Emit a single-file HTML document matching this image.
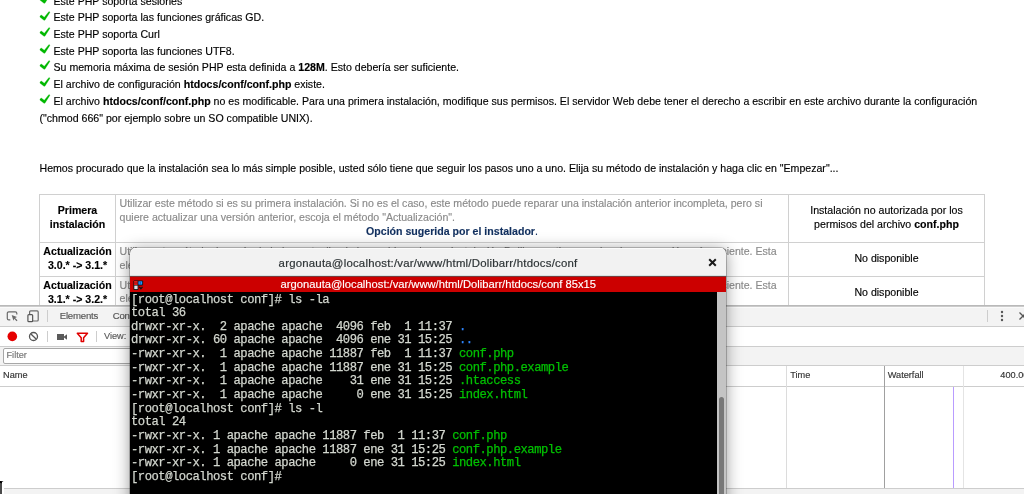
<!DOCTYPE html>
<html><head><meta charset="utf-8">
<style>
html,body{margin:0;padding:0}
body{-webkit-font-smoothing:antialiased;will-change:transform}
.a{-webkit-text-stroke:0.15px currentColor}
body{width:1024px;height:494px;overflow:hidden;position:relative;background:#fff;font-family:"Liberation Sans",sans-serif;font-size:10.6px;color:#000}
.a{position:absolute;white-space:pre;line-height:14px}
.b{font-weight:bold}
.g{color:#8a8a8a}
.ck{position:absolute;width:12px;height:10px}
.hl{position:absolute;height:1px;background:#d0d0d0}
.vl{position:absolute;width:1px;background:#d0d0d0}
.c{text-align:center}
/* devtools */
.dt{position:absolute;left:0;top:305px;width:1024px;height:189px;background:#fff;font-size:9px;color:#333}
.dt .r{position:absolute;left:0;width:1024px}
/* terminal */
.term{position:absolute;left:130px;top:248px;width:596px;height:260px;background:#000;border-radius:5px 5px 0 0;box-shadow:0 0 0 1px rgba(0,0,0,.22), 0 2px 16px rgba(0,0,0,.42);overflow:hidden}
.tt{position:absolute;left:0;top:0;width:596px;height:28px;background:#f2f2f2;border-bottom:0}
.red{position:absolute;left:0;top:28px;width:596px;height:16px;background:#cc0000}
.scr{position:absolute;left:587px;top:44px;width:9px;height:220px;background:#c4c4c4}
.thumb{position:absolute;left:2px;top:105px;width:5px;height:200px;background:#787878;border-radius:3px}
.tx{position:absolute;left:1px;top:45.5px;font-family:"Liberation Mono",monospace;font-size:12.2px;letter-spacing:-0.481px;line-height:13.66px;color:#d3d7cf;white-space:pre;-webkit-text-stroke:0.25px currentColor}
.gr{color:#00c000}
.bl{color:#2f86ff}
</style></head><body>

<!-- checklist -->
<svg class="ck" style="left:39px;top:-5.6px" viewBox="0 0 12 10"><path d="M0.9 5.0 L2.4 4.1 L5.3 6.2 L10.0 0.4 L11.0 1.3 L5.9 9.2 L5.0 9.3 L1.1 6.3 Z" fill="#00b800" stroke="#00b800" stroke-width="0.25" stroke-linejoin="round"/></svg>
<div class="a" style="left:53.5px;top:-6px">Este PHP soporta sesiones</div>
<svg class="ck" style="left:39px;top:10.9px" viewBox="0 0 12 10"><path d="M0.9 5.0 L2.4 4.1 L5.3 6.2 L10.0 0.4 L11.0 1.3 L5.9 9.2 L5.0 9.3 L1.1 6.3 Z" fill="#00b800" stroke="#00b800" stroke-width="0.25" stroke-linejoin="round"/></svg>
<div class="a" style="left:53.5px;top:9.9px">Este PHP soporta las funciones gráficas GD.</div>
<svg class="ck" style="left:39px;top:27.4px" viewBox="0 0 12 10"><path d="M0.9 5.0 L2.4 4.1 L5.3 6.2 L10.0 0.4 L11.0 1.3 L5.9 9.2 L5.0 9.3 L1.1 6.3 Z" fill="#00b800" stroke="#00b800" stroke-width="0.25" stroke-linejoin="round"/></svg>
<div class="a" style="left:53.5px;top:27.2px">Este PHP soporta Curl</div>
<svg class="ck" style="left:39px;top:43.9px" viewBox="0 0 12 10"><path d="M0.9 5.0 L2.4 4.1 L5.3 6.2 L10.0 0.4 L11.0 1.3 L5.9 9.2 L5.0 9.3 L1.1 6.3 Z" fill="#00b800" stroke="#00b800" stroke-width="0.25" stroke-linejoin="round"/></svg>
<div class="a" style="left:53.5px;top:43.9px">Este PHP soporta las funciones UTF8.</div>
<svg class="ck" style="left:39px;top:60.0px" viewBox="0 0 12 10"><path d="M0.9 5.0 L2.4 4.1 L5.3 6.2 L10.0 0.4 L11.0 1.3 L5.9 9.2 L5.0 9.3 L1.1 6.3 Z" fill="#00b800" stroke="#00b800" stroke-width="0.25" stroke-linejoin="round"/></svg>
<div class="a" style="left:53.5px;top:59.8px">Su memoria máxima de sesión PHP esta definida a <b>128M</b>. Esto debería ser suficiente.</div>
<svg class="ck" style="left:39px;top:77.3px" viewBox="0 0 12 10"><path d="M0.9 5.0 L2.4 4.1 L5.3 6.2 L10.0 0.4 L11.0 1.3 L5.9 9.2 L5.0 9.3 L1.1 6.3 Z" fill="#00b800" stroke="#00b800" stroke-width="0.25" stroke-linejoin="round"/></svg>
<div class="a" style="left:53.5px;top:77.3px">El archivo de configuración <b>htdocs/conf/conf.php</b> existe.</div>
<svg class="ck" style="left:39px;top:93.9px" viewBox="0 0 12 10"><path d="M0.9 5.0 L2.4 4.1 L5.3 6.2 L10.0 0.4 L11.0 1.3 L5.9 9.2 L5.0 9.3 L1.1 6.3 Z" fill="#00b800" stroke="#00b800" stroke-width="0.25" stroke-linejoin="round"/></svg>
<div class="a" style="left:53.5px;top:94px">El archivo <b>htdocs/conf/conf.php</b> no es modificable. Para una primera instalación, modifique sus permisos. El servidor Web debe tener el derecho a escribir en este archivo durante la configuración</div>
<div class="a" style="left:39.5px;top:110.5px">("chmod 666" por ejemplo sobre un SO compatible UNIX).</div>

<div class="a" style="left:39.5px;top:161px">Hemos procurado que la instalación sea lo más simple posible, usted sólo tiene que seguir los pasos uno a uno. Elija su método de instalación y haga clic en "Empezar"...</div>

<!-- table -->
<div class="hl" style="left:39px;top:194px;width:946px"></div>
<div class="hl" style="left:39px;top:242px;width:946px"></div>
<div class="hl" style="left:39px;top:276px;width:946px"></div>
<div class="hl" style="left:39px;top:310px;width:946px"></div>
<div class="vl" style="left:39px;top:194px;height:120px"></div>
<div class="vl" style="left:115px;top:194px;height:120px"></div>
<div class="vl" style="left:788px;top:194px;height:120px"></div>
<div class="vl" style="left:984px;top:194px;height:120px"></div>

<div class="a b c" style="left:40px;width:75px;top:203.3px">Primera
instalación</div>
<div class="a b c" style="left:40px;width:75px;top:243.6px">Actualización
3.0.* -&gt; 3.1.*</div>
<div class="a b c" style="left:40px;width:75px;top:278px">Actualización
3.1.* -&gt; 3.2.*</div>

<div class="a g" style="left:119.5px;top:197.3px;line-height:13.5px">Utilizar este método si es su primera instalación. Si no es el caso, este método puede reparar una instalación anterior incompleta, pero si
quiere actualizar una versión anterior, escoja el método "Actualización".</div>
<div class="a c" style="left:116px;width:672px;top:224px;color:#12305f"><b>Opción sugerida por el instalador</b>.</div>

<div class="a g" style="left:119.5px;top:245px;line-height:13.5px">Utilice este método después de haber actualizado los archivos de una instalación Dolibarr antigua por los de una versión más reciente. Esta
elección permite poner al día la base de datos y sus datos para esta nueva versión.</div>
<div class="a g" style="left:119.5px;top:278.9px;line-height:13.5px">Utilice este método después de haber actualizado los archivos de una instalación Dolibarr antigua por los de una versión más reciente. Esta
elección permite poner al día la base de datos y sus datos para esta nueva versión.</div>

<div class="a c" style="left:789px;width:195px;top:203.3px">Instalación no autorizada por los
permisos del archivo <b>conf.php</b></div>
<div class="a c" style="left:789px;width:195px;top:251px">No disponible</div>
<div class="a c" style="left:789px;width:195px;top:285px">No disponible</div>

<!-- devtools -->
<div class="dt">
  <div class="r" style="top:0;height:1px;background:#b9b9b9"></div>
  <div class="r" style="top:1px;height:20px;background:#f3f3f3;border-bottom:1px solid #cdcdcd"></div>
  <div class="r" style="top:1px;height:1px;background:#cbcbcb"></div><div class="r" style="top:2px;height:1px;background:#fafafa"></div>
  <div class="r" style="top:41px;height:18px;background:#f3f3f3;border-top:1px solid #cdcdcd;border-bottom:1px solid #cdcdcd"></div>
  <div class="r" style="top:81px;height:1px;background:#cdcdcd"></div>
  <div class="r" style="top:183px;height:6px;background:#f3f3f3;border-top:1px solid #cdcdcd"></div>

  <!-- toolbar1 icons -->
  <svg style="position:absolute;left:6px;top:5px" width="14" height="13" viewBox="0 0 14 13"><path d="M4.3 9.9 H2.8 a1.5 1.5 0 0 1 -1.5 -1.5 V3.3 a1.5 1.5 0 0 1 1.5 -1.5 H9.3 a1.5 1.5 0 0 1 1.5 1.5 V4.6" fill="none" stroke="#6a6a6a" stroke-width="1.2"/><path d="M5.7 5.1 L11 7.1 L9.1 7.9 L11.5 10.3 L10.6 11.2 L8.2 8.8 L7.4 10.7 Z" fill="#6a6a6a"/></svg>
  <svg style="position:absolute;left:26px;top:4px" width="14" height="14" viewBox="0 0 14 14"><rect x="3.6" y="1.9" width="8.6" height="10.1" rx="1" fill="none" stroke="#6a6a6a" stroke-width="1.2"/><rect x="1.9" y="5.7" width="4.75" height="6.9" rx="0.9" fill="#f3f3f3" stroke="#555" stroke-width="1.2"/></svg>
  <div style="position:absolute;left:47px;top:5px;width:1px;height:12px;background:#cdcdcd"></div>
  <div class="a" style="left:59.7px;top:4.9px;font-size:9.6px;letter-spacing:-0.2px;line-height:12px;color:#555">Elements</div>
  <div class="a" style="left:112.7px;top:4.9px;font-size:9.6px;letter-spacing:-0.2px;line-height:12px;color:#555">Console</div>
  <div style="position:absolute;left:987px;top:5px;width:1px;height:12px;background:#cdcdcd"></div>
  <svg style="position:absolute;left:999px;top:4px" width="6" height="14" viewBox="0 0 6 14"><circle cx="3" cy="3" r="1.2" fill="#555"/><circle cx="3" cy="7" r="1.2" fill="#555"/><circle cx="3" cy="11" r="1.2" fill="#555"/></svg>
  <svg style="position:absolute;left:1018px;top:6px" width="10" height="10" viewBox="0 0 10 10"><path d="M1.5 1.5 L8.5 8.5 M8.5 1.5 L1.5 8.5" stroke="#555" stroke-width="1.3"/></svg>

  <!-- toolbar2 -->
  <svg style="position:absolute;left:6px;top:25px" width="13" height="13" viewBox="0 0 13 13"><circle cx="6.3" cy="6.4" r="4.8" fill="#e60000"/></svg>
  <svg style="position:absolute;left:27px;top:25px" width="13" height="13" viewBox="0 0 13 13"><circle cx="6.5" cy="6.5" r="4" fill="none" stroke="#555" stroke-width="1.3"/><path d="M3.7 3.7 L9.3 9.3" stroke="#555" stroke-width="1.3"/></svg>
  <div style="position:absolute;left:47px;top:26px;width:1px;height:11px;background:#cdcdcd"></div>
  <svg style="position:absolute;left:56px;top:27.6px" width="12" height="8" viewBox="0 0 12 8"><rect x="1" y="1" width="7" height="6" fill="#5a5a5a"/><path d="M8 3.5 L11 1.3 V6.7 L8 4.5Z" fill="#5a5a5a"/></svg>
  <svg style="position:absolute;left:76px;top:27.4px" width="13" height="11" viewBox="0 0 13 11"><path d="M1.3 1.3 H11.5 L7.6 5.8 V9.5 H5.2 V5.8 Z" fill="none" stroke="#e00000" stroke-width="1.5" stroke-linejoin="round"/></svg>
  <div style="position:absolute;left:96px;top:26px;width:1px;height:11px;background:#cdcdcd"></div>
  <div class="a" style="left:104px;top:25px;font-size:9.2px;line-height:12px;color:#5a5a5a">View:</div>

  <!-- filter -->
  <div style="position:absolute;left:3px;top:43px;width:130px;height:14px;background:#fff;border:1px solid #a8a8a8;border-radius:2px"></div>
  <div class="a" style="left:6.5px;top:44px;font-size:9.2px;line-height:12px;color:#777">Filter</div>

  <!-- header -->
  <div class="a" style="left:3px;top:64px;font-size:9.2px;line-height:12px;color:#333">Name</div>
  <div class="a" style="left:790.2px;top:64px;font-size:9.2px;line-height:12px;color:#333">Time</div>
  <div class="a" style="left:887.7px;top:64px;font-size:9.2px;line-height:12px;color:#333">Waterfall</div>
  <div class="a" style="left:1000.3px;top:64px;font-size:9.2px;line-height:12px;color:#333">400.00 ms</div>
  <div style="position:absolute;left:786px;top:61px;width:1px;height:122px;background:#dcdcdc"></div>
  <div style="position:absolute;left:884px;top:61px;width:1px;height:122px;background:#a0a0a0"></div>
  <div style="position:absolute;left:963px;top:61px;width:1px;height:122px;background:#e4e4e4"></div>
  <div style="position:absolute;left:953px;top:82px;width:1px;height:101px;background:#b99cff"></div>
</div>

<div style="position:absolute;left:-7px;top:481px;width:7px;height:20px;border:2px solid #000;border-radius:3px;background:#4a4a4a"></div>
<div style="position:absolute;left:2px;top:482px;width:2px;height:12px;background:#fff"></div>
<!-- terminal window -->
<div class="term">
  <div class="tt"></div><div style="position:absolute;left:3px;top:0;width:590px;height:1px;background:#fbfbfb"></div>
  <div style="position:absolute;left:0;top:27px;width:596px;height:1px;background:#d5e3e3"></div>
  <div class="a" style="left:0;width:596px;text-align:center;top:7.8px;font-size:11.4px;letter-spacing:0.22px;color:#2e3436;-webkit-text-stroke:0.2px #2e3436">argonauta@localhost:/var/www/html/Dolibarr/htdocs/conf</div>
  <svg style="position:absolute;left:578px;top:10px" width="9" height="9" viewBox="0 0 9 9"><path d="M1.2 1.2 L7.8 7.8 M7.8 1.2 L1.2 7.8" stroke="#1a1a1a" stroke-width="2"/></svg>
  <div class="red"></div><div style="position:absolute;left:0;top:28px;width:596px;height:1px;background:#7a3a3a"></div>
  <svg style="position:absolute;left:3px;top:31.5px" width="11" height="11" viewBox="0 0 11 11"><rect x="0.4" y="0.4" width="5" height="9.6" rx="1" fill="#111"/><rect x="4.5" y="0.4" width="5.6" height="5" rx="0.8" fill="#111"/><rect x="1.1" y="1.1" width="3.5" height="3.8" fill="#ff1a1a"/><rect x="1.1" y="2.75" width="3.5" height="0.5" fill="#111"/><rect x="5.4" y="1.3" width="3.8" height="3.3" fill="#1e90ff"/><circle cx="7.3" cy="2.95" r="0.6" fill="#0a3a6a"/><rect x="1.3" y="5.6" width="3.3" height="3.5" fill="#dde3e8"/><path d="M6.3 6.9 L7.9 8.7 L9.5 6.9" fill="none" stroke="#111" stroke-width="1.3"/></svg>
  <div class="a" style="left:150.6px;top:29px;font-size:11.2px;line-height:14px;color:#fff">argonauta@localhost:/var/www/html/Dolibarr/htdocs/conf 85x15</div>
  <div class="tx">[root@localhost conf]# ls -la
total 36
drwxr-xr-x.  2 apache apache  4096 feb  1 11:37 <span class="bl">.</span>
drwxr-xr-x. 60 apache apache  4096 ene 31 15:25 <span class="bl">..</span>
-rwxr-xr-x.  1 apache apache 11887 feb  1 11:37 <span class="gr">conf.php</span>
-rwxr-xr-x.  1 apache apache 11887 ene 31 15:25 <span class="gr">conf.php.example</span>
-rwxr-xr-x.  1 apache apache    31 ene 31 15:25 <span class="gr">.htaccess</span>
-rwxr-xr-x.  1 apache apache     0 ene 31 15:25 <span class="gr">index.html</span>
[root@localhost conf]# ls -l
total 24
-rwxr-xr-x. 1 apache apache 11887 feb  1 11:37 <span class="gr">conf.php</span>
-rwxr-xr-x. 1 apache apache 11887 ene 31 15:25 <span class="gr">conf.php.example</span>
-rwxr-xr-x. 1 apache apache     0 ene 31 15:25 <span class="gr">index.html</span>
[root@localhost conf]# </div>
  <div class="scr"><div class="thumb"></div></div>
</div>

</body></html>
